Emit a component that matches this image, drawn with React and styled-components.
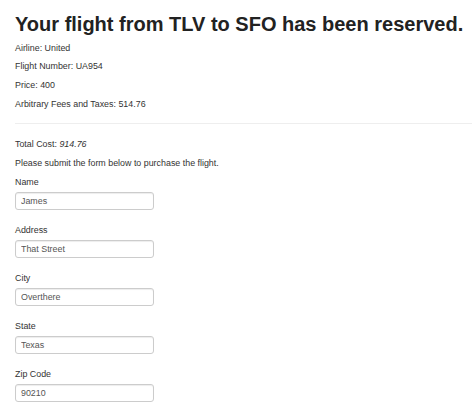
import React from "react";
import styled, { createGlobalStyle } from "styled-components";

const GlobalStyle = createGlobalStyle`
  html, body {
    margin: 0;
    padding: 0;
    background: #fff;
  }
  body {
    font-family: "Liberation Sans", Arial, sans-serif;
    font-size: 8.9px;
    line-height: 12.6px;
    color: #333;
  }
`;

const Container = styled.div`
  padding: 0 2px 0 15px;
`;

const Title = styled.h1`
  margin: 12.5px 0 7px;
  font-size: 20px;
  line-height: 22px;
  font-weight: 700;
  color: #222;
`;

const Line = styled.p`
  margin: 0 0 6.4px;
`;

const Divider = styled.hr`
  margin: 12.4px 0 14px;
  border: 0;
  border-top: 1px solid #eee;
`;

const FormGroup = styled.div`
  display: flex;
  flex-direction: column;
  align-items: flex-start;
  margin-bottom: 14.2px;
`;

const Label = styled.label`
  margin-bottom: 3px;
  font-weight: 400;
`;

const Input = styled.input`
  box-sizing: border-box;
  width: 139px;
  height: 18.2px;
  padding: 0 5px;
  border: 1px solid #ccc;
  border-radius: 3px;
  box-shadow: inset 0 1px 1px rgba(0, 0, 0, 0.075);
  font-family: "Liberation Sans", Arial, sans-serif;
  font-size: 8.9px;
  color: #555;
  background: #fff;
  outline: none;
`;

const fields = [
  { id: "name", label: "Name", value: "James" },
  { id: "address", label: "Address", value: "That Street" },
  { id: "city", label: "City", value: "Overthere" },
  { id: "state", label: "State", value: "Texas" },
  { id: "zip", label: "Zip Code", value: "90210" },
];

function App() {
  return (
    <>
      <GlobalStyle />
      <Container>
        <Title>Your flight from TLV to SFO has been reserved.</Title>
        <Line>Airline: United</Line>
        <Line>Flight Number: UA954</Line>
        <Line>Price: 400</Line>
        <Line>Arbitrary Fees and Taxes: 514.76</Line>
        <Divider />
        <Line>
          Total Cost: <em>914.76</em>
        </Line>
        <Line>Please submit the form below to purchase the flight.</Line>
        <form>
          {fields.map((f) => (
            <FormGroup key={f.id}>
              <Label htmlFor={f.id}>{f.label}</Label>
              <Input id={f.id} defaultValue={f.value} />
            </FormGroup>
          ))}
        </form>
      </Container>
    </>
  );
}

export default App;
